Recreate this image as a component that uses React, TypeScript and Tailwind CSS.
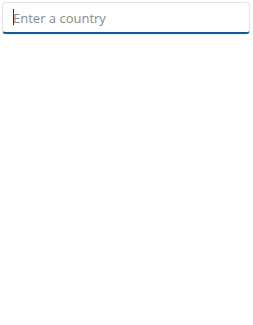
export default function App() {
  return (
    <div className="p-[2px]">
      <div className="relative w-[248px]">
        <input
          autoFocus
          type="text"
          placeholder="Enter a country"
          className="box-border h-[32px] w-full rounded-[4px] border border-[#e4e4e4] border-b-2 border-b-[#0f5a9c] bg-white px-[10px] text-[13px] text-[#242424] caret-transparent outline-none placeholder:text-[#8a8a8a] [font-family:'Open_Sans',sans-serif] shadow-[0_1px_2px_rgba(0,0,0,0.06)]"
        />
        {/* caret */}
        <span className="pointer-events-none absolute left-[11px] top-[7px] h-[16px] w-px bg-[#1f3b5a]" />
      </div>
    </div>
  );
}
